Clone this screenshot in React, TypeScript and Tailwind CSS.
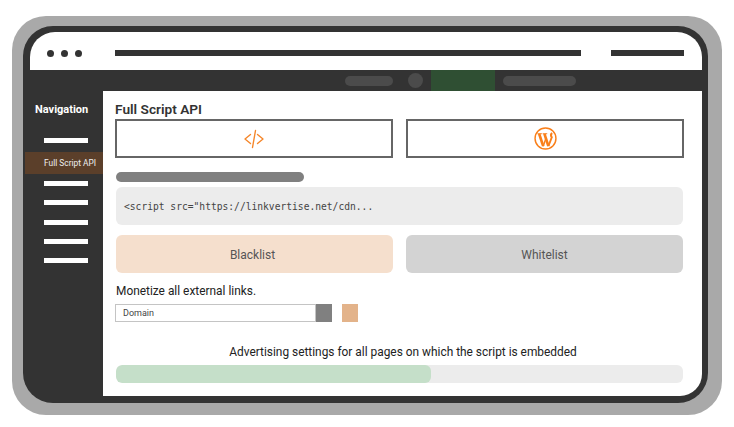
const font = { fontFamily: "Roboto, sans-serif" };

function NavBar({ className }: { className: string }) {
  return <div className={`ml-[14px] w-[44px] h-[5px] bg-white ${className}`} />;
}

function Pill({ className }: { className: string }) {
  return <div className={`h-[10px] rounded-full bg-[#4b4b4b] ${className}`} />;
}

function WordpressLogo() {
  return (
    <svg width="23" height="23" viewBox="0 0 24 24" fill="none" stroke="#f97f1a">
      <circle cx="12" cy="12" r="10.9" strokeWidth="1.5" />
      <path d="M5.4 7.2 9.6 20" strokeWidth="2.8" />
      <path d="M9.6 20 12.4 12" strokeWidth="1.5" />
      <path d="M10.9 7.2 15 20" strokeWidth="2.8" />
      <path d="M15 20 18.8 10.2" strokeWidth="2" />
      <path d="M3.6 7h4.6M9 7h4.8" strokeWidth="1.1" />
      <path d="M18.8 10.6c-1.8-1.6-1.2-3.4.2-4.2" strokeWidth="2.2" />
    </svg>
  );
}

export default function App() {
  return (
    <div className="w-[734px] h-[427px] bg-white pl-[12px] pt-[16px] overflow-hidden" style={font}>
      <div className="w-[710px] h-[399px] bg-[#a9a9a9] rounded-[34px] pl-[11px] pr-[14px] pt-[10px] pb-[12px]">
        <div className="h-full bg-[#333333] rounded-[30px] pl-[7px] pr-[6px] pt-[6px] pb-[7px] flex flex-col">
          {/* browser top bar */}
          <header className="h-[38px] shrink-0 bg-white rounded-t-[25px] flex items-center pl-[17px] pt-[4px]">
            <div className="flex gap-[7px]">
              <span className="w-[7px] h-[7px] rounded-full bg-[#333333]" />
              <span className="w-[7px] h-[7px] rounded-full bg-[#333333]" />
              <span className="w-[7px] h-[7px] rounded-full bg-[#333333]" />
            </div>
            <div className="ml-[33px] w-[466px] h-[6px] bg-[#333333]" />
            <div className="ml-[30px] w-[73px] h-[6px] bg-[#333333]" />
          </header>

          {/* dark strip */}
          <div className="h-[21px] shrink-0 flex items-center pl-[315px]">
            <Pill className="w-[48px]" />
            <div className="ml-[15px] w-[15px] h-[15px] rounded-full bg-[#4b4b4b]" />
            <div className="ml-[8px] w-[64px] h-[21px] bg-[#2f4f33]" />
            <Pill className="ml-[8px] w-[73px]" />
          </div>

          <div className="flex-1 flex min-h-0">
            {/* sidebar */}
            <aside className="w-[73px] shrink-0">
              <div className="pl-[5px] pt-[12px] text-[11px] leading-[14px] font-bold text-white">Navigation</div>
              <NavBar className="mt-[21px]" />
              <div className="mt-[9px] -ml-[5px] w-[78px] h-[22px] bg-[#5b3f2a] pl-[19px] flex items-center text-[8.4px] text-[#eeeeee] whitespace-nowrap">
                Full Script API
              </div>
              <NavBar className="mt-[7px]" />
              <NavBar className="mt-[14px]" />
              <NavBar className="mt-[15px]" />
              <NavBar className="mt-[14px]" />
              <NavBar className="mt-[14px]" />
            </aside>

            {/* main panel */}
            <main className="flex-1 bg-white rounded-br-[22px] pl-[12px] pr-[18px] text-[#333333]">
              <h1 className="pt-[10px] text-[13.7px] leading-[17px] font-semibold">Full Script API</h1>
              <div className="mt-px grid grid-cols-[278px_278px] gap-[13px]">
                <div className="h-[39px] border-2 border-[#666666] flex items-center justify-center">
                  <svg width="20" height="20" viewBox="0 0 20 20" fill="none" stroke="#f5862a" strokeWidth="1.4" strokeLinecap="round" strokeLinejoin="round">
                    <path d="M6.5 5.5 1 10l5.5 4.5" />
                    <path d="M13.5 5.5 19 10l-5.5 4.5" />
                    <path d="M11.5 1.5 8.5 18.5" />
                  </svg>
                </div>
                <div className="h-[39px] border-2 border-[#666666] flex items-center justify-center">
                  <WordpressLogo />
                </div>
              </div>

              <div className="mt-[14px] ml-px w-[188px] h-[10px] rounded-full bg-[#808080]" />

              <div className="mt-[5px] ml-px w-[567px] h-[38px] rounded-[6px] bg-[#ececec] pl-[8px] pt-[3px] flex items-center text-[9.65px] text-[#444444] font-['DejaVu_Sans_Mono',monospace] whitespace-nowrap">
                {'<script src="https://linkvertise.net/cdn...'}
              </div>

              <div className="mt-[10px] ml-px w-[567px] grid grid-cols-[277px_277px] gap-[13px] text-[12px]">
                <div className="h-[38px] rounded-[6px] bg-[#f5dfcd] flex items-center justify-center pt-px pr-[4px] text-[#555555]">Blacklist</div>
                <div className="h-[38px] rounded-[6px] bg-[#d3d3d3] flex items-center justify-center pt-[2px] text-[#555555]">Whitelist</div>
              </div>

              <p className="mt-[11px] ml-px text-[11.9px] leading-[15px] text-[#222222]">Monetize all external links.</p>

              <div className="mt-[5px] flex items-stretch h-[18px]">
                <div className="w-[201px] border border-[#c4c4c4] bg-white pl-[7px] pt-px flex items-center text-[9px] text-[#444444]">Domain</div>
                <div className="w-[16px] bg-[#808080]" />
                <div className="ml-[10px] w-[16px] bg-[#e3b38a]" />
              </div>

              <p className="mt-[23px] ml-px pl-[7px] w-[567px] text-center text-[11.9px] leading-[14px] text-[#222222]">
                Advertising settings for all pages on which the script is embedded
              </p>

              <div className="mt-[6px] ml-px w-[567px] h-[18px] rounded-[6px] bg-[#ececec] overflow-hidden">
                <div className="w-[315px] h-full rounded-[6px] bg-[#c5dfc9]" />
              </div>
            </main>
          </div>
        </div>
      </div>
    </div>
  );
}
